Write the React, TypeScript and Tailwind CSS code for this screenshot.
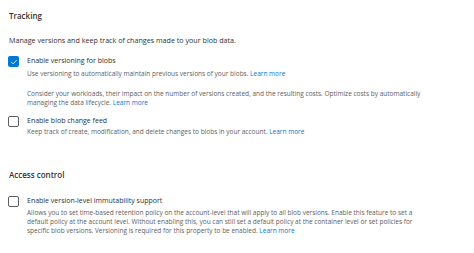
import React from "react";

function Check({ checked }: { checked?: boolean }) {
  if (checked) {
    return (
      <div className="w-[11px] h-[11px] rounded-[2px] bg-[#0078d4] flex items-center justify-center shrink-0">
        <svg width="8" height="8" viewBox="0 0 16 16" fill="none">
          <path d="M3 8.5l3.2 3.2L13 4.8" stroke="white" strokeWidth="1.6" strokeLinecap="round" strokeLinejoin="round" />
        </svg>
      </div>
    );
  }
  return <div className="w-[11px] h-[11px] rounded-[2px] border border-[#605e5c] bg-white shrink-0" />;
}

function Link() {
  return <span className="text-[#0078d4]">Learn more</span>;
}

export default function App() {
  return (
    <div className="w-[474px] h-[253px] bg-white px-[8px] font-['Open_Sans',sans-serif] text-[#323130] overflow-hidden">
      <div className="pt-[10px] text-[8px] font-semibold leading-[12px] pl-[1px]">Tracking</div>
      <div className="mt-[13px] text-[7.15px] leading-[10px] pl-[1px]">
        Manage versions and keep track of changes made to your blob data.
      </div>
      <div className="mt-[11px] flex gap-[8px]">
        <div><Check checked /></div>
        <div className="flex flex-col">
          <div className="text-[7px] leading-[10px]">Enable versioning for blobs</div>
          <div className="text-[6.5px] leading-[9px] text-[#605e5c] mt-[3px]">
            Use versioning to automatically maintain previous versions of your blobs. <Link />
          </div>
          <div className="text-[6.5px] leading-[9px] text-[#605e5c] mt-[11px] w-[402px]">
            Consider your workloads, their impact on the number of versions created, and the resulting costs. Optimize costs by automatically managing the data lifecycle. <Link />
          </div>
        </div>
      </div>
      <div className="mt-[9px] flex gap-[8px]">
        <div><Check /></div>
        <div className="flex flex-col">
          <div className="text-[7px] leading-[10px]">Enable blob change feed</div>
          <div className="text-[6.5px] leading-[9px] text-[#605e5c] mt-[1px]">
            Keep track of create, modification, and delete changes to blobs in your account. <Link />
          </div>
        </div>
      </div>
      <div className="mt-[33px] text-[8px] font-semibold leading-[12px] pl-[1px]">Access control</div>
      <div className="mt-[15px] flex gap-[8px]">
        <div><Check /></div>
        <div className="flex flex-col">
          <div className="text-[7px] leading-[10px]">Enable version-level immutability support</div>
          <div className="text-[6.5px] leading-[9px] text-[#605e5c] mt-[2px] w-[396px]">
            Allows you to set time-based retention policy on the account-level that will apply to all blob versions. Enable this feature to set a default policy at the account level. Without enabling this, you can still set a default policy at the container level or set policies for specific blob versions. Versioning is required for this property to be enabled. <Link />
          </div>
        </div>
      </div>
    </div>
  );
}
